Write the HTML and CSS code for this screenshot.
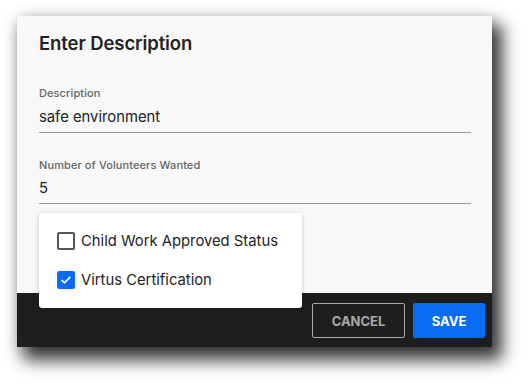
FILE: index.html
```html
<!DOCTYPE html>
<html>
<head>
<meta charset="utf-8">
<link rel="stylesheet" href="styles.css">
</head>
<body>
<div class="page">
  <div class="dialog">
    <div class="content">
      <h2 class="title">Enter Description</h2>
      <div class="field field-first">
        <div class="label">Description</div>
        <div class="value">safe environment</div>
      </div>
      <div class="field field-second">
        <div class="label">Number of Volunteers Wanted</div>
        <div class="value">5</div>
      </div>
    </div>
    <div class="footer">
      <button class="btn btn-cancel">CANCEL</button>
      <button class="btn btn-save">SAVE</button>
    </div>
    <div class="menu">
      <div class="option">
        <span class="box"></span>
        <span class="opt-text">Child Work Approved Status</span>
      </div>
      <div class="option">
        <span class="box checked">
          <svg width="18" height="18" viewBox="0 0 18 18"><path d="M5 9.3 L7.6 11.8 L12.8 6.4" fill="none" stroke="#fff" stroke-width="1.6" stroke-linecap="round" stroke-linejoin="round"/></svg>
        </span>
        <span class="opt-text">Virtus Certification</span>
      </div>
    </div>
  </div>
</div>
</body>
</html>
```
FILE: styles.css
```css
* { box-sizing: border-box; }
html, body { margin: 0; padding: 0; background: #fff; }
body { font-family: "Inter", "Liberation Sans", sans-serif; color: #222; }
.page { padding: 16px 0 0 17px; min-height: 385px; }
.dialog {
  position: relative;
  width: 475px;
  height: 331px;
  background: #f8f8f8;
  display: flex;
  flex-direction: column;
  box-shadow: 8px 11px 16px 2px rgba(0,0,0,0.78), 0 0 14px rgba(0,0,0,0.14);
}
.content { flex: 1; padding: 0 21px 0 22px; }
.title {
  margin: 15px 0 0 0;
  font-size: 18.5px;
  line-height: 24px;
  font-weight: 600;
  color: #222;
  letter-spacing: -0.1px;
}
.field { border-bottom: 1px solid #999; }
.field-first { margin-top: 31px; }
.field-second { margin-top: 25px; }
.label {
  font-size: 11px;
  line-height: 14px;
  color: #666;
  font-weight: 500;
  letter-spacing: 0.1px;
}
.value {
  font-size: 14.8px;
  line-height: 20px;
  padding: 7px 0 5px;
  color: #222;
}
.field-second .value { padding-top: 6px; }
.footer {
  height: 54px;
  background: #1e1e1e;
  display: flex;
  justify-content: flex-end;
  align-items: flex-start;
  gap: 8px;
  padding: 10px 7px 0 0;
}
.btn {
  height: 35px;
  font-family: inherit;
  font-size: 13px;
  font-weight: 700;
  border-radius: 2px;
  cursor: pointer;
}
.btn-cancel {
  width: 93px;
  background: transparent;
  border: 1px solid #aaa;
  color: #aaa;
}
.btn-save {
  width: 72px;
  background: #0a6cf5;
  border: none;
  color: #fff;
}
.menu {
  position: absolute;
  left: 22px;
  top: 197px;
  width: 263px;
  height: 95px;
  background: #fff;
  border-radius: 3px;
  box-shadow: 0 1px 5px rgba(0,0,0,0.2);
  padding: 19px 0 0 18px;
  display: flex;
  flex-direction: column;
  gap: 21px;
}
.option { display: flex; align-items: center; gap: 6px; height: 18px; }
.box {
  width: 18px;
  height: 18px;
  border: 2px solid #555;
  border-radius: 2px;
  display: flex;
}
.box.checked { background: #0a6cf5; border: none; }
.opt-text { font-size: 14.8px; color: #222; }
```
